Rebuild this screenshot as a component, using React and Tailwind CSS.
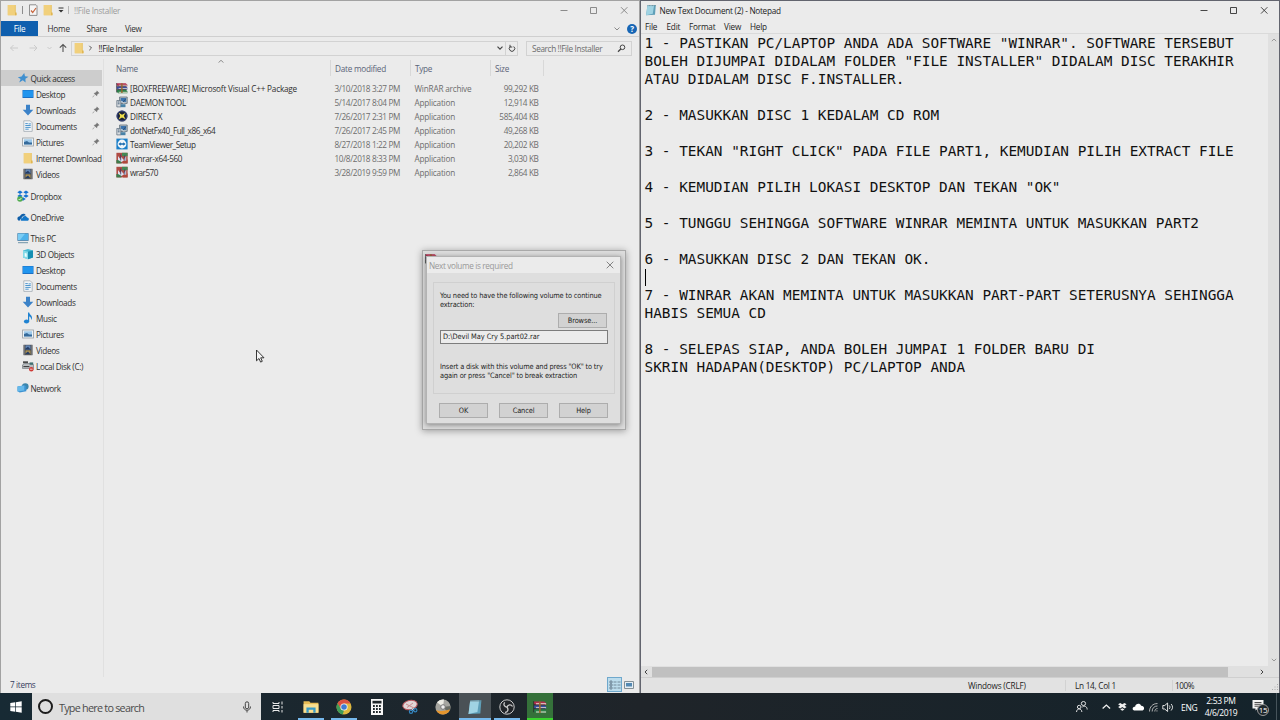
const quickAccess = [
    { name: 'Desktop', icon: 'desktop', pinned: true },
    { name: 'Downloads', icon: 'download', pinned: true },
    { name: 'Documents', icon: 'document', pinned: true },
    { name: 'Pictures', icon: 'picture', pinned: true },
    { name: 'Internet Download', icon: 'folder' },
    { name: 'Videos', icon: 'video' },
];

const thisPc = [
    { name: '3D Objects', icon: 'cube' },
    { name: 'Desktop', icon: 'desktop' },
    { name: 'Documents', icon: 'document' },
    { name: 'Downloads', icon: 'download' },
    { name: 'Music', icon: 'music' },
    { name: 'Pictures', icon: 'picture' },
    { name: 'Videos', icon: 'video' },
    { name: 'Local Disk (C:)', icon: 'disk' },
];

const files = [
    { name: '[BOXFREEWARE] Microsoft Visual C++ Package', date: '3/10/2018 3:27 PM', type: 'WinRAR archive', size: '99,292 KB', icon: 'rar', tracking: 'tracking-[-0.2px]' },
    { name: 'DAEMON TOOL', date: '5/14/2017 8:04 PM', type: 'Application', size: '12,914 KB', icon: 'setup', tracking: 'tracking-[-0.3px]' },
    { name: 'DIRECT X', date: '7/26/2017 2:31 PM', type: 'Application', size: '585,404 KB', icon: 'directx', tracking: 'tracking-[-0.25px]' },
    { name: 'dotNetFx40_Full_x86_x64', date: '7/26/2017 2:45 PM', type: 'Application', size: '49,268 KB', icon: 'setup', tracking: 'tracking-[-0.46px]' },
    { name: 'TeamViewer_Setup', date: '8/27/2018 1:22 PM', type: 'Application', size: '20,202 KB', icon: 'teamviewer', tracking: 'tracking-[-0.45px]' },
    { name: 'winrar-x64-560', date: '10/8/2018 8:33 PM', type: 'Application', size: '3,030 KB', icon: 'sfx', tracking: 'tracking-[-0.4px]' },
    { name: 'wrar570', date: '3/28/2019 9:59 PM', type: 'Application', size: '2,864 KB', icon: 'sfx', tracking: 'tracking-[-0.55px]' },
];

const noteBefore = `1 - PASTIKAN PC/LAPTOP ANDA ADA SOFTWARE "WINRAR". SOFTWARE TERSEBUT
BOLEH DIJUMPAI DIDALAM FOLDER "FILE INSTALLER" DIDALAM DISC TERAKHIR
ATAU DIDALAM DISC F.INSTALLER.

2 - MASUKKAN DISC 1 KEDALAM CD ROM

3 - TEKAN "RIGHT CLICK" PADA FILE PART1, KEMUDIAN PILIH EXTRACT FILE

4 - KEMUDIAN PILIH LOKASI DESKTOP DAN TEKAN "OK"

5 - TUNGGU SEHINGGA SOFTWARE WINRAR MEMINTA UNTUK MASUKKAN PART2

6 - MASUKKAN DISC 2 DAN TEKAN OK.`;

const noteAfter = `7 - WINRAR AKAN MEMINTA UNTUK MASUKKAN PART-PART SETERUSNYA SEHINGGA
HABIS SEMUA CD

8 - SELEPAS SIAP, ANDA BOLEH JUMPAI 1 FOLDER BARU DI
SKRIN HADAPAN(DESKTOP) PC/LAPTOP ANDA`;

// all small icons share a 12x12 grid
const shapes = {
    star: (
        <path d="M7.2 1 8 4.2 11.5 4.8 8.4 6.8 8.6 10.5 5.8 8.3 2.2 10.5 3.6 7 .8 5.2 4.6 4.4Z" fill="#3f8fcf" />
    ),
    desktop: (
        <>
            <rect x=".5" y="2" width="11" height="8" fill="#1a6fc4" />
            <rect x="1" y="2.5" width="10" height="6.5" fill="#2195ee" />
        </>
    ),
    download: <path d="M4 .8h4v5h3.3L6 11.6.7 5.8H4Z" fill="#3b82c8" />,
    document: (
        <>
            <path d="M1.8.8h6.4l2 2v8.6H1.8Z" fill="#f1f5f8" stroke="#9aa3aa" strokeWidth=".7" />
            <path d="M3.3 3.6h2.5M3.3 5.5h5.4M3.3 7.4h5.4M3.3 9.2h3.4" stroke="#4f96cc" />
            <path d="M6.5 3h2.4v1.6H6.5Z" fill="#8ab8dc" />
        </>
    ),
    picture: (
        <>
            <rect x=".6" y="2" width="10.8" height="8" fill="#eef3f6" stroke="#949ca2" strokeWidth=".8" />
            <rect x="2" y="3.3" width="8" height="5.2" fill="#9cc8ea" />
            <path d="M2 8.5V6l3-1 2 1.4h3v2.1Z" fill="#356a9a" />
        </>
    ),
    folder: (
        <>
            <path d="M1.8 1h8v10.2h-8Z" fill="#e8c364" />
            <path d="M1.8 1h7v7.8l1.6.8v1.6H1.8Z" fill="#f1d07c" />
            <path d="M9.2 8.6h1.3v2.7H9.2Z" fill="#dcae46" />
        </>
    ),
    video: (
        <>
            <rect x="1.5" y=".8" width="9" height="10.4" fill="#3c3f45" />
            <rect x="3.4" y="1.3" width="5.2" height="4.3" fill="#6487b5" />
            <rect x="3.4" y="6.3" width="5.2" height="4.4" fill="#a79058" />
            <path d="M3.4 4.4 6 2.8l2.6 2.8H3.4ZM3.4 9.5 6 7.6l2.6 3H3.4Z" fill="#243c66" />
            <path d="M2.4 1.5v9.5M9.6 1.5v9.5" stroke="#c9c9c9" strokeWidth=".8" strokeDasharray="1 1" />
        </>
    ),
    dropbox: (
        <>
            <path d="M3 .6 5.7 2.3 3 4 .3 2.3ZM9 .6l2.7 1.7L9 4 6.3 2.3ZM3 4.3 5.7 6 3 7.7.3 6ZM9 4.3 11.7 6 9 7.7 6.3 6Z" fill="#1573d3" />
            <path d="M6 7.3 8.8 9 6 10.8 3.5 9Z" fill="#1573d3" />
            <circle cx="3" cy="9" r="2.8" fill="#54ad52" />
            <path d="m1.6 9 1 1 1.8-2" stroke="#fff" strokeWidth=".8" fill="none" />
        </>
    ),
    onedrive: (
        <>
            <path d="M1.2 9.4C-.7 7.2 1.2 5 3 5.3c.8-3 4.6-3.4 5.7-1.1-2.6.1-4.2 2-4.3 3.5C3 7.8 2.9 8.8 3.3 9.4Z" fill="#0f5ea8" />
            <path d="M4.2 9.8C3 8.2 4.2 7 5.4 7.3c.5-3 4-3 4.8-.7 1.9 0 2.2 2.7.6 3.2Z" fill="#1377c9" />
        </>
    ),
    pc: (
        <>
            <rect x=".4" y="1.2" width="11.2" height="7.6" fill="#3d7ba8" />
            <rect x="1" y="1.8" width="10" height="6.2" fill="#4db2ea" />
            <path d="M1 1.8h7L3 8H1Z" fill="#7accf4" />
            <path d="M1 10.7h10" stroke="#7094a8" />
        </>
    ),
    cube: (
        <>
            <path d="m1 2.6 5-1.5 5 1.5v7L6 11.3 1 9.6Z" fill="#48bbd4" />
            <path d="m1 2.6 5 1.2v7.5L1 9.6Z" fill="#84dae8" />
            <path d="m6 3.8 5-1.2v7l-5 1.7Z" fill="#168fb2" />
            <path d="m2.7 4.9 2 .5v3.5l-2-.5Z" fill="#efffff" />
        </>
    ),
    music: (
        <>
            <ellipse cx="4.5" cy="9.5" rx="2.6" ry="2" fill="#1f83d2" />
            <path d="M6 .6h1.2c.2 2 3 2.8 2.8 5.4-.2.9-.6 1.5-1 1.9.3-2-.6-3-1.8-3.3v5.2H6Z" fill="#1f83d2" />
        </>
    ),
    disk: (
        <>
            <path d="M1 1.3h5v2H1Z" fill="#4a4a4a" />
            <path d="M.4 5 2.3 3.6h8L11.6 5v3.4H.4Z" fill="#b9bdc0" stroke="#62676b" strokeWidth=".6" />
            <path d="M1.4 6.6h6" stroke="#333" />
            <path d="M7.6 2.4h3.6v2.4H7.6Z" fill="#3e6f70" />
            <circle cx="9.3" cy="9.2" r="2.3" fill="#cf3a35" />
            <path d="M8 9.2h2.6" stroke="#fff" strokeWidth=".7" />
        </>
    ),
    network: (
        <>
            <circle cx="8.3" cy="4.6" r="3.3" fill="#3b86ad" />
            <path d="m.5 4.4 7-1.1 1.8 1v5L2.7 10.6.5 9.3Z" fill="#3d93d2" />
            <path d="m.5 4.4 6.8-1v5l-6.8 1Z" fill="#67b9ea" />
        </>
    ),
    rar: (
        <>
            <path d="M.7 1.2h9l1.7 1.6v1.4H2.2L.7 3Z" fill="#b32f50" />
            <path d="M.7 4.4h9l1.7 1.2v1.8H2.2L.7 6.4Z" fill="#3b4fa3" />
            <path d="M.7 7.8h9l1.7 1.2v2.2H2.2L.7 9.8Z" fill="#2c7f49" />
            <path d="M2.6 3.3h8.6M2.6 6.7h8.6M2.6 10.3h8.6" stroke="#ece3d5" strokeWidth=".9" />
            <path d="M.7 4.2h10M.7 7.5h10M.6 1v9.5" stroke="#231c24" strokeWidth=".6" />
            <path d="M5.2 1.2h1.4v9.9H5.2Z" fill="#96662e" />
        </>
    ),
    sfx: (
        <>
            <rect x=".4" y=".8" width="11.2" height="10.6" fill="#b04b44" />
            <path d="M6 .8h5.6v3.4H6Z" fill="#458954" />
            <path d="M.4 8h5v3.4h-5Z" fill="#3d7c4c" />
            <path d="M7 7.5h4.6v3.9H7Z" fill="#b0483c" />
            <path d="m2 4 2.2 3 1.4-2 1.8 3 2.8-4.2v5L7.6 8.6 5.7 10 2 8Z" fill="#dde1ef" />
            <path d="M4.7 2.5v6M8.8 3.4v5.2" stroke="#303868" strokeWidth=".8" />
        </>
    ),
    setup: (
        <>
            <path d="M3.6 1h7.6v6.4H3.6Z" fill="#bdc7cf" stroke="#4d5b68" strokeWidth=".7" />
            <path d="M4.6 2h5.6v3.9H4.6Z" fill="#3c73ad" />
            <path d="M.8 4.5h4v6.4h-4Z" fill="#d7dce0" stroke="#566878" strokeWidth=".7" />
            <path d="M4.8 8.2h4.7v3H4.8Z" fill="#4982a7" />
            <path d="M1.8 6h1.8M1.8 7.8h1.8M6 7.4l3.8-4.6" stroke="#2b4865" strokeWidth=".8" />
            <path d="m5.2 4.8 2.7 2.7" stroke="#f3f6f8" />
        </>
    ),
    directx: (
        <>
            <circle cx="6" cy="6" r="5.5" fill="#1d2438" />
            <path d="m2.8 2.8 3.2 2L9.4 3l-1.6 3 1.8 3.3L6 7.5 2.6 9.6 4.2 6Z" fill="#f0e04e" />
            <circle cx="6" cy="6" r="5" fill="none" stroke="#44549a" strokeWidth=".8" />
        </>
    ),
    teamviewer: (
        <>
            <rect x=".4" y=".6" width="11.2" height="10.8" fill="#1b7fc9" />
            <circle cx="6" cy="6" r="4.4" fill="#f0f6fa" />
            <path d="m2.4 6 2.3-1.8v1.1h2.6V4.2L9.6 6 7.3 7.8V6.7H4.7v1.1Z" fill="#1768ad" />
        </>
    ),
    notepad: (
        <>
            <path d="M2.4 1.4 10.8 1 10 10.8l-8.9.4Z" fill="#5f9fb8" />
            <path d="m2.4 1.4 6.7-.2-1.3 8.6-6.7 1.4Z" fill="#a0d3e3" />
            <path d="M2.6 1.6h8" stroke="#6b8791" strokeDasharray=".8 .7" />
        </>
    ),
};

function Icon({ name, className = 'size-3' }) {
    return (
        <svg viewBox="0 0 12 12" className={`${className} shrink-0`}>
            {shapes[name]}
        </svg>
    );
}

function Pin() {
    return (
        <svg viewBox="0 0 8 8" className="size-2 shrink-0 ml-auto mr-[3px]">
            <path d="m4.8.5 2.7 2.7-1 .2-1.3 1.4-.1 1.5L3 4.6.8 7.4.5 7.1 3 4.3 1.6 2.9l1.6-.1L4.6 1.5Z" fill="#777" />
        </svg>
    );
}

function NavRow({ name, icon, pinned }) {
    return (
        <div className="flex h-4 items-center pl-[21px]">
            <Icon name={icon} />
            <span className="ml-[2px] whitespace-nowrap">{name}</span>
            {pinned && <Pin />}
        </div>
    );
}

function NavRoot({ name, icon, className = '' }) {
    return (
        <div className={`flex h-4 items-center pl-4 ${className}`}>
            <Icon name={icon} />
            <span className="ml-[1.5px]">{name}</span>
        </div>
    );
}

function WindowButtons({ className }) {
    return (
        <svg viewBox="0 0 72 10" className={`h-2.5 w-[72px] ml-auto ${className}`} fill="none" stroke="currentColor" strokeWidth=".9">
            <path d="M1.5 5.5h7M31.5 2.5h6v6h-6ZM62 2.2l6.4 6.4M68.4 2.2 62 8.6" />
        </svg>
    );
}

function Explorer() {
    return (
        <div className="relative flex w-[640px] flex-col border-t border-r border-l border-[#a2a2a2] bg-[#ebebeb] text-[8.2px] leading-[11px] tracking-[-0.35px] text-[#303030]">
            <div className="flex h-5 items-center pb-[2px] pl-[5px]">
                <Icon name="folder" />
                <span className="ml-1 h-2 w-px bg-[#8d8d8d]" />
                <svg viewBox="0 0 12 12" className="ml-[4px] size-3">
                    <path d="M2.5.8H9l1 1v9.6H2.5Z" fill="#f5f5f5" stroke="#777" strokeWidth=".8" />
                    <path d="m4 6.500 1.700 2L9 4" fill="none" stroke="#c8643c" strokeWidth="1.2" />
                </svg>
                <Icon name="folder" className="ml-[3px] size-3" />
                <svg viewBox="0 0 6 6" className="ml-[4px] size-[6px]">
                    <path d="M.5 1h5" stroke="#333" />
                    <path d="M.5 3h5L3 5.5Z" fill="#333" />
                </svg>
                <span className="ml-[4px] h-2 w-px bg-[#b5b5b5]" />
                <span className="ml-[5px] tracking-[-0.25px] text-[#9b9b9b]">!!File Installer</span>
                <WindowButtons className="mr-[8px] text-[#808080]" />
            </div>
            <div className="flex h-4 items-center border-b border-[#cfcfcf]">
                <div className="flex h-[15px] w-[37px] items-center justify-center bg-[#0f5fae] text-white">File</div>
                <span className="ml-[9.5px] w-[39px] tracking-[-0.2px]">Home</span>
                <span className="w-[38.5px]">Share</span>
                <span>View</span>
                <svg viewBox="0 0 8 8" className="ml-auto size-2" fill="none" stroke="#8a8a8a">
                    <path d="m1.500 2.500 2.500 2.500 2.500-2.500" />
                </svg>
                <span className="ml-[6px] flex size-[10px] items-center justify-center rounded-full bg-[#1766b5] text-[8px] leading-none font-bold text-white">?</span>
                <span className="w-[2px]" />
            </div>
            <div className="flex h-[22px] items-center pl-2">
                <svg viewBox="0 0 60 10" className="h-2.5 w-[60px]" fill="none">
                    <path d="M9 5H1.500M4.500 2l-3 3 3 3M20.500 5H28M25 2l3 3-3 3" stroke="#cbcbcb" />
                    <path d="m38.500 4 2 2 2-2" stroke="#cbcbcb" />
                    <path d="M54 9V1.500M50.800 4.700 54 1.500l3.200 3.200" stroke="#555" strokeWidth="1.1" />
                </svg>
                <div className="ml-[2px] flex h-[15px] w-[447px] items-center border border-[#d2d2d2]">
                    <Icon name="folder" className="ml-[1px] size-3" />
                    <svg viewBox="0 0 6 6" className="ml-[3px] size-[6px]" fill="none" stroke="#555">
                        <path d="m1.300.800 2.200 2.200-2.200 2.200" />
                    </svg>
                    <span className="ml-[4.5px] text-[#222]">!!File Installer</span>
                    <svg viewBox="0 0 8 8" className="ml-auto mr-px size-2" fill="none" stroke="#444" strokeWidth="1.2">
                        <path d="M1.500 2.700 4 5.200l2.500-2.500" />
                    </svg>
                    <div className="flex h-full w-[12px] items-center justify-center border-l border-[#d2d2d2]">
                        <svg viewBox="0 0 8 8" className="size-2" fill="none" stroke="#444">
                            <path d="M2.300 2.500a2.700 2.700 0 1 0 3.400 0M2 .800v2.200h2.300" />
                        </svg>
                    </div>
                </div>
                <div className="ml-2 flex h-[15px] w-[106px] items-center border border-[#d2d2d2] pl-[5px] text-[#6c6c6c]">
                    Search !!File Installer
                    <svg viewBox="0 0 9 9" className="ml-auto mr-[5px] size-[9px]" fill="none" stroke="#444">
                        <circle cx="5.500" cy="3.300" r="2.300" />
                        <path d="M3.800 5 1 7.800" strokeWidth="1.3" />
                    </svg>
                </div>
            </div>
            <div className="flex grow">
                <div className="w-[103px] shrink-0 border-r border-[#e0e0e0] pt-[11px]">
                    <NavRoot name="Quick access" icon="star" className="w-[101px] bg-[#cdcdcd]" />
                    {quickAccess.map((item) => <NavRow key={item.name} {...item} />)}
                    <NavRoot name="Dropbox" icon="dropbox" className="mt-[6px]" />
                    <NavRoot name="OneDrive" icon="onedrive" className="mt-[5px]" />
                    <NavRoot name="This PC" icon="pc" className="mt-[5px]" />
                    {thisPc.map((item) => <NavRow key={item.name} {...item} />)}
                    <NavRoot name="Network" icon="network" className="mt-[6px]" />
                </div>
                <div className="grow pl-[12px]">
                    <svg viewBox="0 0 8 4" className="ml-[101px] h-1 w-2" fill="none" stroke="#777" strokeWidth=".8">
                        <path d="M1.500 3.600 4 1.300l2.500 2.300" />
                    </svg>
                    <div className="-mt-[3px] flex h-4 items-center tracking-[-0.25px] text-[#5a6478]">
                        <span className="w-[214px]">Name</span>
                        <span className="flex h-full w-20 items-center border-l border-[#d8d8d8] pl-[4px]">Date modified</span>
                        <span className="flex h-full w-20 items-center border-l border-[#d8d8d8] pl-[4px]">Type</span>
                        <span className="flex h-full w-[54px] items-center border-r border-l border-[#d8d8d8] pl-[4px]">Size</span>
                    </div>
                    <div className="mt-[5px]">
                        {files.map((file) => (
                            <div key={file.name} className="flex h-[14px] items-center text-[#6d6d6d]">
                                <Icon name={file.icon} />
                                <span className={`ml-[2px] w-[204.5px] whitespace-nowrap text-[#303030] ${file.tracking}`}>{file.name}</span>
                                <span className="w-20 whitespace-nowrap">{file.date}</span>
                                <span className="w-[74px] tracking-[-0.2px]">{file.type}</span>
                                <span className="w-[50px] text-right">{file.size}</span>
                            </div>
                        ))}
                    </div>
                </div>
            </div>
            <div className="flex h-4 items-center pb-px pl-[9px] text-[#36405e]">
                7 items
                <div className="ml-auto flex h-[15px] w-[15px] items-center justify-center border border-[#6fa8cc] bg-[#bcdcec]">
                    <svg viewBox="0 0 12 10" className="h-2.5 w-3" fill="none" stroke="#5f7585" strokeWidth=".8">
                        <path d="M1 1h2v2H1ZM1 4h2v2H1ZM1 7h2v2H1ZM4.500 2h3M8.500 2h3M4.500 5h3M8.500 5h3M4.500 8h3M8.500 8h3" />
                    </svg>
                </div>
                <svg viewBox="0 0 10 8" className="ml-[2px] mr-[5px] h-2 w-2.5">
                    <path d="M.5.5h9v7h-9Z" fill="#e5eef4" stroke="#849096" />
                    <path d="M2 2h6v3.500H2Z" fill="#5489b2" />
                </svg>
            </div>
            <Dialog />
            <svg viewBox="0 0 12 16" className="absolute top-[348px] left-[254px] h-4 w-3">
                <path d="M1.500 1v10.800l2.500-2.300 1.600 3.600 1.700-.8-1.600-3.500H9Z" fill="#f5f5f5" stroke="#222" strokeWidth=".9" />
            </svg>
        </div>
    );
}

function Dialog() {
    const button = 'flex h-[15px] w-[49px] items-center justify-center border border-[#adadad] bg-[#d2d2d2]';
    return (
        <div className="absolute top-[249px] left-[421px] h-[180px] w-[204px] border border-[#a9a9a9] bg-[#dcdcdc] shadow-[0_1px_7px_rgba(0,0,0,0.35)]">
            <Icon name="rar" className="absolute top-[2px] left-[2px] size-3" />
            <div className="absolute top-[5px] left-[3px] flex h-[168px] w-[195px] flex-col border border-[#b3b3b3] bg-[#dedede] font-['DejaVu_Sans_Condensed','DejaVu_Sans',sans-serif] text-[7.4px] leading-none tracking-[-0.13px] text-[#1e1e1e] shadow-[0_1px_5px_rgba(0,0,0,0.4)]">
                <div className="flex h-4 shrink-0 items-center bg-[#ebebeb] pl-[2px] font-['Open_Sans',sans-serif] text-[8.2px] leading-[11px] tracking-[-0.35px] text-[#999]">
                    Next volume is required
                    <svg viewBox="0 0 8 8" className="ml-auto mr-[6px] size-2" stroke="#777" strokeWidth=".9">
                        <path d="m.700.700 6.600 6.600M7.300.700.700 7.300" />
                    </svg>
                </div>
                <div className="mr-[5px] ml-[6px] mt-[9px] flex h-[112px] flex-col border border-[#d0d0d0] px-[6px] pt-[8px]">
                    <p className="leading-[9px] tracking-[-0.15px] whitespace-nowrap">You need to have the following volume to continue<br />extraction:</p>
                    <div className={`${button} mt-[4px] mr-px self-end`}>Browse...</div>
                    <div className="mt-[2px] flex h-[14px] items-center border border-[#7d7d7d] bg-[#ececec] pl-[2px] tracking-[-0.05px]">D:\Devil May Cry 5.part02.rar</div>
                    <p className="mt-[18px] leading-[9px] tracking-[-0.15px] whitespace-nowrap">Insert a disk with this volume and press "OK" to try<br />again or press "Cancel" to break extraction</p>
                </div>
                <div className="mt-[9px] flex justify-between px-[12px]">
                    <div className={button}>OK</div>
                    <div className={button}>Cancel</div>
                    <div className={button}>Help</div>
                </div>
            </div>
        </div>
    );
}

function Notepad() {
    return (
        <div className="flex w-[640px] flex-col border-t border-r border-l border-[#62646e] bg-[#ebebeb] text-[8.2px] leading-[11px] tracking-[-0.2px] text-[#222]">
            <div className="flex h-[19px] shrink-0 items-center pb-px pl-[4px]">
                <Icon name="notepad" />
                <span className="ml-[2.5px] tracking-[-0.26px]">New Text Document (2) - Notepad</span>
                <WindowButtons className="mr-[8px] text-[#333]" />
            </div>
            <div className="flex h-[14px] shrink-0 items-center border-b border-[#dadada] pl-[4px]">
                <span className="w-[21.5px]">File</span>
                <span className="w-[22.5px]">Edit</span>
                <span className="w-[35px]">Format</span>
                <span className="w-[26px]">View</span>
                <span>Help</span>
            </div>
            <div className="flex grow">
                <div className="grow pl-[3.5px] font-['DejaVu_Sans_Mono',monospace] text-[14.4px] leading-[18px] tracking-normal text-[#111]">
                    <pre className="font-[inherit]">{noteBefore}</pre>
                    <div className="flex h-[18px] items-center">
                        <span className="h-[17px] w-px bg-black" />
                    </div>
                    <pre className="font-[inherit]">{noteAfter}</pre>
                </div>
                <div className="flex w-[11px] flex-col items-center justify-between bg-[#e0e0e0] py-1">
                    <svg viewBox="0 0 6 4" className="h-1 w-1.5" fill="none" stroke="#999"><path d="m.8 3.200 2.200-2.200 2.200 2.200" /></svg>
                    <svg viewBox="0 0 6 4" className="h-1 w-1.5" fill="none" stroke="#999"><path d="M.8.8 3 3 5.200.8" /></svg>
                </div>
            </div>
            <div className="flex h-[11px] shrink-0 items-center bg-[#e0e0e0] pl-[3px]">
                <svg viewBox="0 0 4 6" className="h-1.5 w-1" fill="none" stroke="#444"><path d="M3.200.8 1 3l2.200 2.200" /></svg>
                <span className="ml-[4px] h-[10px] w-[576px] bg-[#c0c0c0]" />
                <svg viewBox="0 0 4 6" className="ml-auto mr-[15px] h-1.5 w-1" fill="none" stroke="#444"><path d="M.8.8 3 3 .8 5.200" /></svg>
            </div>
            <div className="flex h-4 shrink-0 items-center border-t border-[#cfcfcf] bg-[#e2e2e2] pb-px">
                <span className="w-[424px] pl-[327px]">Windows (CRLF)</span>
                <span className="w-[107px] border-l border-[#d2d2d2] pl-[9px] tracking-[-0.25px]">Ln 14, Col 1</span>
                <span className="border-l border-[#d2d2d2] pl-[2px] tracking-[-0.4px]">100%</span>
                <svg viewBox="0 0 8 8" className="ml-auto mt-1 size-2" fill="#aaa">
                    <path d="M6 1h1v1H6ZM6 3.500h1v1H6ZM3.500 3.500h1v1h-1ZM6 6h1v1H6ZM3.500 6h1v1h-1ZM1 6h1v1H1Z" />
                </svg>
            </div>
        </div>
    );
}

function Task({ className = '', children }) {
    return (
        <div className={`mr-[7px] flex h-full w-[26px] shrink-0 items-center justify-center border-y-2 border-t-transparent ${className}`}>
            {children}
        </div>
    );
}

function Taskbar() {
    return (
        <div className="flex h-[27px] items-center bg-gradient-to-r from-[#172a34] via-[#1f2429] via-50% to-[#14232b] text-white">
            <div className="flex w-8 justify-center">
                <svg viewBox="0 0 12 12" className="size-3" fill="#fff">
                    <path d="m.3 2 4.900-.700v4.300H.3ZM5.900 1.200 11.700.3v5.300H5.900ZM.3 6.300h4.900v4.400L.3 10ZM5.900 6.300h5.800v5.400l-5.800-.9Z" />
                </svg>
            </div>
            <div className="flex h-full w-[229px] items-center bg-[#dfdfdf] text-[#4b4b4b]">
                <span className="ml-[6px] size-[15px] rounded-full border-2 border-[#1d1d1d]" />
                <span className="ml-[6px] pt-px text-[10.8px] leading-[15px] tracking-[-0.75px]">Type here to search</span>
                <svg viewBox="0 0 10 12" className="ml-auto mr-[9px] h-3 w-2.5" fill="none" stroke="#444">
                    <rect x="3.300" y=".8" width="3.400" height="7" rx="1.700" />
                    <path d="M1.500 5.500c0 5 7 5 7 0M5 9.500v2" />
                </svg>
            </div>
            <div className="flex h-full pl-[4px]">
                <Task className="border-b-transparent">
                    <svg viewBox="0 0 12 12" className="size-3" fill="none" stroke="#e8e8e8">
                        <path d="M1 1v1.500h6V1M1 4.500h6v3H1ZM1 11V9.500h6V11M10 .5v3M10 5v2.500M10 9v2.500" />
                    </svg>
                </Task>
                <Task className="border-b-[#76b9ed]">
                    <svg viewBox="0 0 14 12" className="h-3.5 w-4">
                        <path d="M.5 1h5l1 1.300h7V11H.5Z" fill="#e9bd55" />
                        <path d="M.5 3.500h13V11H.5Z" fill="#f8df92" />
                        <path d="M3 11V6.500h8V11H9V8.500H5V11Z" fill="#389bc7" />
                    </svg>
                </Task>
                <Task className="border-b-[#76b9ed]">
                    <svg viewBox="0 0 16 16" className="size-4">
                        <circle cx="8" cy="8" r="7.500" fill="#ddb83f" />
                        <path d="M1.500 4.300A7.500 7.500 0 0 1 14.600 4.500H8L4.800 9.800Z" fill="#db5143" />
                        <path d="M1.500 4.300 4.900 9.800 8 11.500 6.700 15.400A7.500 7.500 0 0 1 1.500 4.300Z" fill="#3f9b58" />
                        <circle cx="8" cy="8" r="3.600" fill="#f5f5f5" />
                        <circle cx="8" cy="8" r="2.800" fill="#3f7bd3" />
                    </svg>
                </Task>
                <Task className="border-b-transparent">
                    <svg viewBox="0 0 12 16" className="h-4 w-3">
                        <path d="M0 0h12v16H0Z" fill="#f6f6f6" />
                        <path d="M1.500 1.800h9v2.700h-9Z" fill="#20272b" />
                        <path d="M2 7h8M2 10h8M2 13h8" stroke="#20272b" strokeWidth="1.8" strokeDasharray="1.8 1.2" />
                    </svg>
                </Task>
                <Task className="border-b-transparent">
                    <svg viewBox="0 0 16 16" className="size-4">
                        <ellipse cx="8" cy="6" rx="7.300" ry="4.500" transform="rotate(-12 8 6)" fill="#e2d6d7" stroke="#bd5960" />
                        <path d="m4 5 8 4M5 8.500 11 4" stroke="#c98a8e" />
                        <path d="m8 8 5 5M12 9l-3 3" stroke="#c8d8e0" />
                        <circle cx="9" cy="12.700" r="1.600" fill="none" stroke="#3385bf" strokeWidth="1.2" />
                        <circle cx="13.300" cy="11.300" r="1.600" fill="none" stroke="#3385bf" strokeWidth="1.2" />
                    </svg>
                </Task>
                <Task className="border-b-transparent">
                    <svg viewBox="0 0 16 16" className="size-4">
                        <circle cx="8" cy="8" r="7.600" fill="#a5a5a0" />
                        <path d="M8 8 2 3.300A7.600 7.600 0 0 1 9 .5Z" fill="#ecece5" />
                        <path d="m8 8 7.500-1A7.600 7.600 0 0 1 13 13.600Z" fill="#686b64" />
                        <path d="M1 11c4 1.500 8 1 14-.5A7.600 7.600 0 0 1 1 11Z" fill="#e6962d" />
                        <circle cx="8" cy="8" r="2.300" fill="#eee" stroke="#777" />
                    </svg>
                </Task>
            </div>
            <div className="-ml-[4px] mr-[3px] flex h-full w-8 items-center justify-center border-y-2 border-t-[#4a5156] border-b-[#76b9ed] bg-[#4a5156]">
                <Icon name="notepad" className="size-4" />
            </div>
            <Task className="border-b-[#76b9ed]">
                <svg viewBox="0 0 16 16" className="size-4" fill="none" stroke="#cbcbcb">
                    <circle cx="8" cy="8" r="7.200" fill="#222529" />
                    <path d="M8 8.300c-3-.5-3.800-3-2.300-5M8 8.300c1-3 4.200-3 5.500-.8M8 8.300c2 2.300.5 5-2 5" strokeWidth="1.3" />
                </svg>
            </Task>
            <Task className="border-b-[#3bd32e] bg-[#35713a]">
                <Icon name="rar" className="h-3.5 w-4" />
            </Task>
            <div className="ml-auto flex h-full items-center">
                <svg viewBox="0 0 92 14" className="h-3.5 w-[98px]" preserveAspectRatio="none" fill="none" stroke="#eee" strokeWidth=".9">
                    <circle cx="7" cy="3.500" r="2" />
                    <circle cx="3" cy="7" r="1.700" />
                    <path d="M.5 12c0-4 5-4 5 0M6 7c2.500-2 4.500 0 4.500 2.500" />
                    <path d="m25 8.500 3.500-3.500 3.500 3.500" strokeWidth="1.2" />
                    <path d="m41.500 3 2 1.300 2-1.300 2 1.300-2 1.400 2 1.400-2 1.300-2-1.300-2 1.300-2-1.300 2-1.400-2-1.400ZM41.500 9.500l2 1.200 2-1.200-2-1.200Z" fill="#eee" stroke="none" />
                    <path d="M54.500 10.500c-2.500-1.500-1-4.200 1-3.800.5-3.500 4.700-3.700 5.600-.9 3.200-.3 3.700 4.200 1.400 4.700Z" fill="#fff" stroke="none" />
                    <path d="M69 11.500C69 7 72 3.500 76.500 3.500M71.500 11.500c0-3.500 2-5.500 5-5.500M74 11.500c0-1.800 1-3 2.500-3M76 11.500v-1.200" stroke="#bbb" />
                    <path d="M81.500 5.500h1.800L86 3v8.500L83.300 9h-1.800ZM87.500 5.500c1 1.200 1 2.300 0 3.500M89.300 4c1.800 2.300 1.800 4.300 0 6.500" />
                </svg>
                <span className="ml-[7px] w-[22px] pt-px text-[8.5px] leading-[11px] tracking-[-0.3px]">ENG</span>
                <div className="w-[36px] text-center text-[8.5px] leading-[12px] tracking-[-0.35px] whitespace-nowrap">
                    <div>2:53 PM</div>
                    <div>4/6/2019</div>
                </div>
                <div className="relative ml-[13px] mr-[6px] h-4 w-[18px]">
                    <svg viewBox="0 0 12 12" className="size-3">
                        <path d="M.5 1h11v8.500H6l-2.500 2v-2h-3Z" fill="#f4f4f4" />
                        <path d="M2.500 3.500h7M2.500 5.300h7M2.500 7.200h5" stroke="#222" strokeWidth=".8" />
                    </svg>
                    <span className="absolute top-[5px] left-[5px] flex size-[12px] items-center justify-center rounded-full border border-[#999] bg-[#20282d] text-[8px] tracking-[-0.3px]">15</span>
                </div>
                <span className="mr-[3px] h-full w-px bg-[#46545b]" />
            </div>
        </div>
    );
}

export default function App() {
    return (
        <div className="flex h-[720px] w-[1280px] flex-col overflow-hidden font-['Open_Sans',sans-serif] leading-none">
            <div className="flex h-[693px]">
                <Explorer />
                <Notepad />
            </div>
            <Taskbar />
        </div>
    );
}
